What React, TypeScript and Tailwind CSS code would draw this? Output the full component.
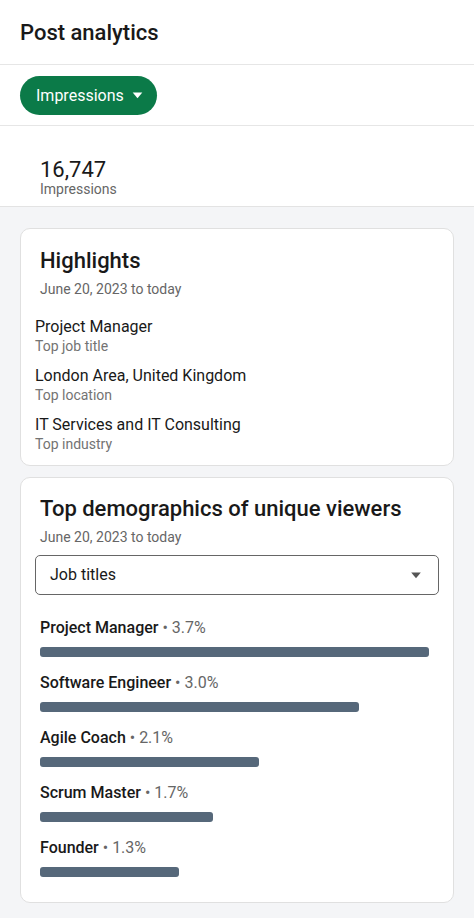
const font = { fontFamily: "Roboto, 'Noto Sans', Arial, sans-serif" };

type Viewer = { title: string; pct: string; width: number };

const viewers: Viewer[] = [
  { title: "Project Manager", pct: "3.7%", width: 389 },
  { title: "Software Engineer", pct: "3.0%", width: 319 },
  { title: "Agile Coach", pct: "2.1%", width: 219 },
  { title: "Scrum Master", pct: "1.7%", width: 173 },
  { title: "Founder", pct: "1.3%", width: 139 },
];

const highlights = [
  { value: "Project Manager", label: "Top job title" },
  { value: "London Area, United Kingdom", label: "Top location" },
  { value: "IT Services and IT Consulting", label: "Top industry" },
];

function Caret({ className }: { className: string }) {
  return (
    <svg viewBox="0 0 12 8" className={className} fill="currentColor">
      <path d="M0.5 0.5h11L6 7z" />
    </svg>
  );
}

export default function App() {
  return (
    <div className="min-h-[918px] w-[474px] bg-[#f4f5f7] text-[#191919]" style={font}>
      <div className="bg-white">
        <div className="flex h-[65px] items-center border-b border-[#e6e6e6] px-5 pt-[2px]">
          <h1 className="text-[22px] font-medium leading-none">Post analytics</h1>
        </div>

        <div className="flex h-[61px] items-start border-b border-[#e6e6e6] px-5 pt-[11px]">
          <button
            type="button"
            className="flex h-[39px] items-center gap-[8px] rounded-full bg-[#0b7a48] pl-4 pr-[14px] text-[16px] text-white"
          >
            Impressions
            <Caret className="h-[7px] w-[11px]" />
          </button>
        </div>

        <div className="flex h-[81px] flex-col border-b border-[#e3e3e3] px-10 pt-[33px]">
          <p className="text-[22px] leading-[22px]">16,747</p>
          <p className="text-[14px] leading-[16px] text-[#666666]">Impressions</p>
        </div>
      </div>

      <div className="flex flex-col gap-[11px] px-5 pt-[21px] pb-[17px]">
        <section className="rounded-[10px] border border-[#e0e0e0] bg-white pt-[18px] pb-[12px]">
          <h2 className="px-[19px] text-[22px] font-medium leading-[28px]">Highlights</h2>
          <p className="mt-[4px] px-[19px] text-[14px] leading-[20px] text-[#666666]">June 20, 2023 to today</p>
          <div className="mt-[18px] flex flex-col gap-[11px] px-[14px]">
            {highlights.map((h) => (
              <div key={h.label}>
                <p className="text-[16px] leading-[20px]">{h.value}</p>
                <p className="text-[14px] leading-[18px] text-[#737373]">{h.label}</p>
              </div>
            ))}
          </div>
        </section>

        <section className="rounded-[10px] border border-[#e0e0e0] bg-white pt-[17px] pb-[25px]">
          <h2 className="px-[19px] text-[22px] font-medium leading-[28px]">Top demographics of unique viewers</h2>
          <p className="mt-[4px] px-[19px] text-[14px] leading-[20px] text-[#666666]">June 20, 2023 to today</p>
          <div className="mx-[14px] mt-[8px] flex h-[40px] items-center justify-between rounded-[5px] border border-[#666666] pl-[14px] pr-[16px]">
            <span className="text-[16px]">Job titles</span>
            <Caret className="h-[7px] w-[12px] text-[#555555]" />
          </div>
          <div className="mt-[23px] flex flex-col gap-[16px] px-[19px]">
            {viewers.map((v) => (
              <div key={v.title}>
                <p className="text-[16px] leading-[20px]">
                  <span className="font-medium">{v.title}</span>
                  <span className="text-[#666666]"> • {v.pct}</span>
                </p>
                <div
                  className="mt-[9px] h-[10px] rounded-[3px] bg-[#56687a]"
                  style={{ width: v.width }}
                />
              </div>
            ))}
          </div>
        </section>
      </div>
    </div>
  );
}
